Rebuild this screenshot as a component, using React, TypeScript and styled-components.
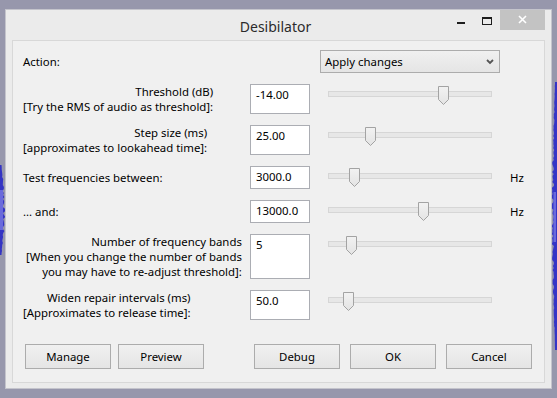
import React from "react"
import styled, { createGlobalStyle } from "styled-components"

const GlobalStyle = createGlobalStyle`
  html, body {
    margin: 0;
    padding: 0;
  }
  body {
    background: #9797ac;
    font-family: "Noto Sans", "Open Sans", sans-serif;
    font-size: 11.4px;
    color: #000;
  }
`

const Desktop = styled.div`
  position: relative;
  width: 557px;
  height: 398px;
  padding: 9px 5px;
  box-sizing: border-box;
  overflow: hidden;
`

const Wave = styled.svg<{ $side: "left" | "right" }>`
  position: absolute;
  top: 0;
  ${({ $side }) => ($side === "left" ? "left: 0;" : "right: 0;")}
`

const Window = styled.div`
  position: relative;
  width: 547px;
  height: 380px;
  box-sizing: border-box;
  background: #ebebeb;
  border: 1px solid #c4c4cc;
  display: flex;
  flex-direction: column;
`

const TitleBar = styled.div`
  height: 30px;
  display: grid;
  grid-template-columns: 1fr auto 1fr;
  align-items: start;
  padding-right: 6px;
`

const Title = styled.div`
  font-size: 14px;
  color: #2b2b2b;
  line-height: 33px;
`

const Controls = styled.div`
  justify-self: end;
  display: flex;
`

const CaptionButton = styled.div<{ $wide?: boolean; $close?: boolean }>`
  width: ${({ $wide }) => ($wide ? 45 : 26)}px;
  height: 20px;
  display: flex;
  justify-content: center;
  align-items: flex-start;
  background: ${({ $close }) => ($close ? "#c3c3c3" : "transparent")};
`

const MinGlyph = styled.div`
  width: 8px;
  height: 2px;
  margin-top: 12px;
  background: #1e1e1e;
`

const MaxGlyph = styled.div`
  width: 8px;
  height: 5px;
  margin-top: 7px;
  border: 1px solid #1e1e1e;
  border-top-width: 2px;
`

const Panel = styled.div`
  flex: 1;
  margin: 0 6px 5px;
  background: #f0f0f0;
  border: 1px solid #d8d8d8;
  padding: 9px 0 0 10px;
  display: flex;
  flex-direction: column;
`

const Rows = styled.div`
  display: flex;
  flex-direction: column;
  gap: 11px;
`

const Row = styled.div`
  display: flex;
  align-items: flex-start;
`

const LabelCell = styled.div<{ $width: number }>`
  width: ${({ $width }) => $width}px;
  flex: none;
  align-self: stretch;
  display: flex;
  align-items: center;
`

const Label = styled.div<{ $indent?: number }>`
  text-align: right;
  line-height: 15px;
  margin-left: ${({ $indent }) => $indent ?? 0}px;
  white-space: nowrap;
`

const Select = styled.div`
  width: 180px;
  height: 23px;
  box-sizing: border-box;
  border: 1px solid #acacac;
  background: linear-gradient(#f0f0f0, #e5e5e5);
  display: flex;
  align-items: center;
  justify-content: space-between;
  padding: 0 5px 0 4px;
`

const TextBox = styled.div<{ $height: number }>`
  width: 60px;
  height: ${({ $height }) => $height}px;
  box-sizing: border-box;
  flex: none;
  background: #fff;
  border: 1px solid #abadb3;
  padding: 2px 0 0 5px;
  line-height: 15px;
`

const Slider = styled.div`
  position: relative;
  width: 164px;
  height: 20px;
  margin-left: 18px;
  flex: none;
`

const Track = styled.div`
  position: absolute;
  left: 0;
  right: 0;
  top: 7px;
  height: 4px;
  background: #e7e7e7;
  border: 1px solid #d6d6d6;
`

const Thumb = styled.svg`
  position: absolute;
  top: 2px;
`

const Unit = styled.div`
  margin-left: 18px;
  align-self: center;
  line-height: 15px;
`

const ButtonBar = styled.div`
  display: flex;
  margin: 24px 0 0 2px;
`

const Button = styled.div<{ $gap: number }>`
  width: 86px;
  height: 25px;
  box-sizing: border-box;
  margin-left: ${({ $gap }) => $gap}px;
  border: 1px solid #acacac;
  background: linear-gradient(#f0f0f0, #e5e5e5);
  display: flex;
  align-items: center;
  justify-content: center;
`

const ThumbIcon = ({ left }: { left: number }) => (
  <Thumb width="11" height="19" style={{ left }}>
    <defs>
      <linearGradient id="tg" x1="0" y1="0" x2="0" y2="1">
        <stop offset="0" stopColor="#f2f2f2" />
        <stop offset="1" stopColor="#e3e3e3" />
      </linearGradient>
    </defs>
    <polygon
      points="0.5,0.5 10.5,0.5 10.5,13.5 5.5,18.5 0.5,13.5"
      fill="url(#tg)"
      stroke="#a3a3a3"
    />
  </Thumb>
)

// jagged edge of the audio track peeking out from behind the dialog
const wavePath = (h: number, seed: number, amp: number, base: number) => {
  let s = seed
  const rnd = () => {
    s = (s * 9301 + 49297) % 233280
    return s / 233280
  }
  const pts: string[] = []
  for (let y = 0; y <= h; y += 2) {
    const env = Math.sin((Math.PI * y) / h)
    pts.push(`${(base + amp * env * (0.3 + 0.7 * rnd())).toFixed(1)},${y}`)
  }
  return `M0,0 L${pts.join(" L")} L0,${h} Z`
}

type Field = {
  label: string[]
  value: string
  height: number
  thumb: number
  unit?: string
  indent?: number
}

const fields: Field[] = [
  {
    label: ["Threshold (dB)", "[Try the RMS of audio as threshold]:"],
    value: "-14.00",
    height: 30,
    thumb: 110,
  },
  {
    label: ["Step size (ms)", "[approximates to lookahead time]:"],
    value: "25.00",
    height: 30,
    thumb: 37,
  },
  {
    label: ["Test frequencies between:"],
    value: "3000.0",
    height: 23,
    thumb: 21,
    unit: "Hz",
  },
  { label: ["... and:"], value: "13000.0", height: 23, thumb: 90, unit: "Hz" },
  {
    label: [
      "Number of frequency bands",
      "[When you change the number of bands",
      "you may have to re-adjust threshold]:",
    ],
    value: "5",
    height: 45,
    thumb: 18,
    indent: 3,
  },
  {
    label: ["Widen repair intervals (ms)", "[Approximates to release time]:"],
    value: "50.0",
    height: 30,
    thumb: 15,
  },
]

const buttons: [string, number][] = [
  ["Manage", 0],
  ["Preview", 7],
  ["Debug", 50],
  ["OK", 10],
  ["Cancel", 10],
]

export default function App() {
  return (
    <>
      <GlobalStyle />
      <Desktop>
        <Wave $side="left" width="5" height="398">
          <g transform="translate(0,165)">
            <path d={wavePath(90, 7, 4, 1.5)} fill="#3434c4" />
            <rect x="0" y="25" width="3" height="40" fill="#6a6adc" />
          </g>
        </Wave>
        <Wave $side="right" width="5" height="398">
          <g transform="translate(5,82) scale(-1,1)">
            <path d={wavePath(268, 3, 3.5, 2)} fill="#3535c6" />
            <rect x="1" y="110" width="2.5" height="50" fill="#6a6adc" />
          </g>
        </Wave>
        <Window>
          <TitleBar>
            <div />
            <Title>Desibilator</Title>
            <Controls>
              <CaptionButton>
                <MinGlyph />
              </CaptionButton>
              <CaptionButton>
                <MaxGlyph />
              </CaptionButton>
              <CaptionButton $wide $close>
                <svg width="45" height="20">
                  <path d="M19 6 L26 13 M26 6 L19 13" stroke="#fff" strokeWidth="1.6" />
                </svg>
              </CaptionButton>
            </Controls>
          </TitleBar>
          <Panel>
            <Rows>
              <Row>
                <LabelCell $width={297}>
                  <Label>Action:</Label>
                </LabelCell>
                <Select>
                  <span>Apply changes</span>
                  <svg width="8" height="6">
                    <path d="M1 1 L4 4 L7 1" stroke="#555" strokeWidth="1.8" fill="none" />
                  </svg>
                </Select>
              </Row>
              {fields.map((f) => (
                <Row key={f.value}>
                  <LabelCell $width={227}>
                    <Label $indent={f.indent}>
                      {f.label.map((l) => (
                        <div key={l}>{l}</div>
                      ))}
                    </Label>
                  </LabelCell>
                  <TextBox $height={f.height}>{f.value}</TextBox>
                  <Slider>
                    <Track />
                    <ThumbIcon left={f.thumb} />
                  </Slider>
                  {f.unit && <Unit>{f.unit}</Unit>}
                </Row>
              ))}
            </Rows>
            <ButtonBar>
              {buttons.map(([t, g]) => (
                <Button key={t} $gap={g}>
                  {t}
                </Button>
              ))}
            </ButtonBar>
          </Panel>
        </Window>
      </Desktop>
    </>
  )
}
